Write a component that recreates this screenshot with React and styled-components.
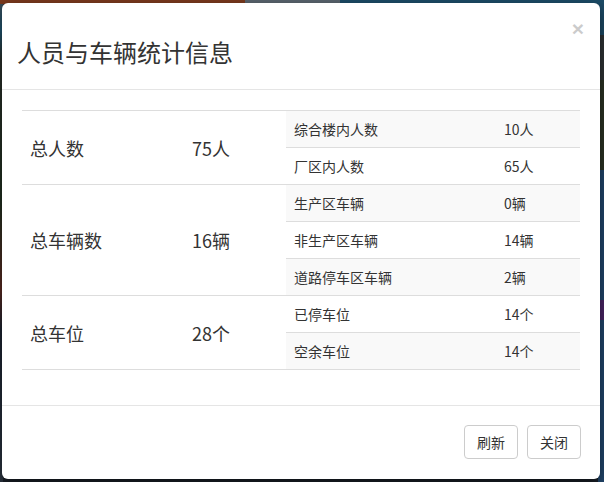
import React from "react";
import styled, { createGlobalStyle } from "styled-components";

const GlobalStyle = createGlobalStyle`
  * {
    box-sizing: border-box;
  }

  body {
    margin: 0;
    font-family: "Noto Sans CJK SC", "Noto Sans", sans-serif;
    color: #333;
  }
`;

const Backdrop = styled.div`
  width: 604px;
  height: 482px;
  padding: 3px 4px 3px 2px;
  background:
    linear-gradient(90deg, #7c3a1e 0, #7c3a1e 245px, #5b6670 245px, #5b6670 340px, #1c4c68 340px) top / 100% 4px no-repeat,
    linear-gradient(180deg, #1d4a66 0 35px, #2f3336 35px 80px, #2c3324 80px 170px, #22466c 170px 300px, #4a2466 300px 320px, #22466c 320px) right / 6px 100% no-repeat,
    linear-gradient(180deg, #3d4b55 0, #1f5570 30px, #2a2f2a 60px, #203020 200px, #5a2a22 290px, #1b2330 330px, #2b3440) left / 3px 100% no-repeat,
    #1a2028;
`;

const Modal = styled.div`
  width: 598px;
  height: 476px;
  background: #fff;
  border-radius: 6px;
  box-shadow: 0 5px 15px rgba(0, 0, 0, 0.5);
  display: flex;
  flex-direction: column;
  overflow: hidden;
`;

const Header = styled.div`
  display: flex;
  justify-content: space-between;
  align-items: flex-start;
  height: 87px;
  padding: 15px 16px 0 15px;
  border-bottom: 1px solid #e5e5e5;
`;

const Title = styled.h4`
  margin: 21px 0 0;
  font-size: 24px;
  font-weight: 400;
  line-height: 26px;
  color: #333;
`;

const CloseButton = styled.button`
  padding: 0;
  border: 0;
  background: transparent;
  font-family: "Liberation Sans", Arial, sans-serif;
  font-size: 21px;
  font-weight: 700;
  line-height: 1;
  color: #000;
  opacity: 0.2;
  cursor: pointer;
`;

const Body = styled.div`
  padding: 20px 20px 20px;
  flex: 1;
`;

const StatsTable = styled.table`
  width: 558px;
  border-collapse: collapse;
  table-layout: fixed;
  margin-bottom: 15px;
  border-bottom: 1px solid #ddd;
`;

const MainCell = styled.td`
  width: ${(p) => p.$width}px;
  padding: 0 8px;
  border-top: 1px solid #ddd;
  font-size: 18px;
  line-height: 24px;
  vertical-align: middle;
`;

const NestedCell = styled.td`
  padding: 0;
  border-top: 1px solid #ddd;
  vertical-align: top;
`;

const SubTable = styled.table`
  width: 100%;
  border-collapse: collapse;
  table-layout: fixed;
`;

const SubRow = styled.tr`
  background: ${(p) => (p.$striped ? "#f9f9f9" : "#fff")};
`;

const SubCell = styled.td`
  width: ${(p) => (p.$value ? "84px" : "auto")};
  padding: 8px;
  border-top: ${(p) => (p.$first ? "0" : "1px solid #ddd")};
  font-size: 14px;
  line-height: 20px;
`;

const Footer = styled.div`
  display: flex;
  justify-content: flex-end;
  gap: 9px;
  padding: 19px 19px 20px 15px;
  border-top: 1px solid #e5e5e5;
`;

const Button = styled.button`
  height: 34px;
  min-width: 54px;
  padding: 6px 12px;
  border: 1px solid #ccc;
  border-radius: 4px;
  background: #fff;
  color: #333;
  font-family: inherit;
  font-size: 14px;
  line-height: 20px;
  cursor: pointer;

  &:hover {
    background: #e6e6e6;
    border-color: #adadad;
  }
`;

const groups = [
  {
    label: "总人数",
    total: "75人",
    items: [
      ["综合楼内人数", "10人"],
      ["厂区内人数", "65人"],
    ],
  },
  {
    label: "总车辆数",
    total: "16辆",
    items: [
      ["生产区车辆", "0辆"],
      ["非生产区车辆", "14辆"],
      ["道路停车区车辆", "2辆"],
    ],
  },
  {
    label: "总车位",
    total: "28个",
    items: [
      ["已停车位", "14个"],
      ["空余车位", "14个"],
    ],
  },
];

export default function App() {
  let rowIndex = 0;

  return (
    <>
      <GlobalStyle />
      <Backdrop>
        <Modal>
          <Header>
            <Title>人员与车辆统计信息</Title>
            <CloseButton aria-label="关闭">×</CloseButton>
          </Header>

          <Body>
            <StatsTable>
              <tbody>
                {groups.map((g) => (
                  <tr key={g.label}>
                    <MainCell $width={162}>{g.label}</MainCell>
                    <MainCell $width={102}>{g.total}</MainCell>
                    <NestedCell>
                      <SubTable>
                        <tbody>
                          {g.items.map(([name, count], i) => {
                            const striped = rowIndex++ % 2 === 0;
                            return (
                              <SubRow key={name} $striped={striped}>
                                <SubCell $first={i === 0}>{name}</SubCell>
                                <SubCell $first={i === 0} $value>
                                  {count}
                                </SubCell>
                              </SubRow>
                            );
                          })}
                        </tbody>
                      </SubTable>
                    </NestedCell>
                  </tr>
                ))}
              </tbody>
            </StatsTable>
          </Body>

          <Footer>
            <Button>刷新</Button>
            <Button>关闭</Button>
          </Footer>
        </Modal>
      </Backdrop>
    </>
  );
}
